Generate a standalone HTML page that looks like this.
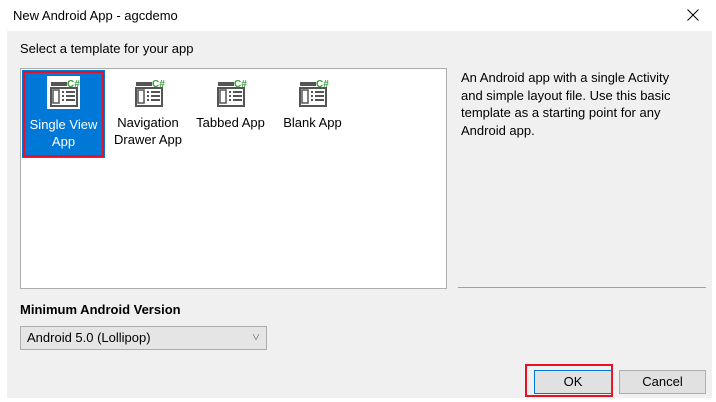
<!DOCTYPE html>
<html><head><style>
body{margin:0;width:716px;height:402px;background:#fff;position:relative;overflow:hidden;font-family:"Liberation Sans","Noto Sans CJK SC",sans-serif;font-size:13px;color:#000}
.a{position:absolute}
.panel{left:7px;top:31px;width:705px;height:367px;background:#f0f0f0}
.list{left:20px;top:68px;width:425px;height:219px;background:#fff;border:1px solid #adadad}
.item{position:absolute;top:2px;width:81px;height:86px;text-align:center;line-height:17px}
.item .t{position:absolute;top:43px;left:0;width:100%}
.ic{position:absolute;left:24px;top:5px;width:33px;height:33px}
.btn{background:#e1e1e1;border:1px solid #adadad;text-align:center;line-height:22px}
</style></head><body>
<div class="a" style="left:13px;top:8px">New Android App - agcdemo</div>
<svg class="a" style="left:687px;top:9px" width="12" height="12" viewBox="0 0 12 12"><path d="M0.5 0.5L11.5 11.5M11.5 0.5L0.5 11.5" stroke="#000" stroke-width="1"/></svg>
<div class="a panel"></div>
<div class="a" style="left:20px;top:41px">Select a template for your app</div>
<div class="a list">
 <div class="item" style="left:2px;background:#0078d7;color:#fff;box-sizing:border-box;border:2px solid #e81123;outline:1px solid #0078d7">
  <svg class="ic" style="left:22px;top:3px;background:#fff" viewBox="0 0 33 33"><rect x="4" y="6" width="16" height="4" fill="#555"/><text x="20" y="11" font-size="10" font-weight="bold" fill="#3c9b3c" font-family="Liberation Sans">C#</text><rect x="4" y="12" width="26" height="18" fill="none" stroke="#555" stroke-width="2"/><rect x="6" y="14" width="6" height="13" fill="none" stroke="#555" stroke-width="1.5"/><path d="M15 16h2M19 16h9M15 20h2M19 20h9M15 24h2M19 24h9" stroke="#555" stroke-width="2"/></svg>
  <div class="t">Single View<br>App</div></div>
 <div class="item" style="left:87px;width:80px">
  <svg class="ic" viewBox="0 0 33 33"><rect x="4" y="6" width="16" height="4" fill="#555"/><text x="20" y="11" font-size="10" font-weight="bold" fill="#3c9b3c" font-family="Liberation Sans">C#</text><rect x="4" y="12" width="26" height="18" fill="none" stroke="#555" stroke-width="2"/><rect x="6" y="14" width="6" height="13" fill="none" stroke="#555" stroke-width="1.5"/><path d="M15 16h2M19 16h9M15 20h2M19 20h9M15 24h2M19 24h9" stroke="#555" stroke-width="2"/></svg>
  <div class="t">Navigation<br>Drawer App</div></div>
 <div class="item" style="left:169px">
  <svg class="ic" viewBox="0 0 33 33"><rect x="4" y="6" width="16" height="4" fill="#555"/><text x="20" y="11" font-size="10" font-weight="bold" fill="#3c9b3c" font-family="Liberation Sans">C#</text><rect x="4" y="12" width="26" height="18" fill="none" stroke="#555" stroke-width="2"/><rect x="6" y="14" width="6" height="13" fill="none" stroke="#555" stroke-width="1.5"/><path d="M15 16h2M19 16h9M15 20h2M19 20h9M15 24h2M19 24h9" stroke="#555" stroke-width="2"/></svg>
  <div class="t">Tabbed App</div></div>
 <div class="item" style="left:251px">
  <svg class="ic" viewBox="0 0 33 33"><rect x="4" y="6" width="16" height="4" fill="#555"/><text x="20" y="11" font-size="10" font-weight="bold" fill="#3c9b3c" font-family="Liberation Sans">C#</text><rect x="4" y="12" width="26" height="18" fill="none" stroke="#555" stroke-width="2"/><rect x="6" y="14" width="6" height="13" fill="none" stroke="#555" stroke-width="1.5"/><path d="M15 16h2M19 16h9M15 20h2M19 20h9M15 24h2M19 24h9" stroke="#555" stroke-width="2"/></svg>
  <div class="t">Blank App</div></div>
</div>
<div class="a" style="left:461px;top:69px;width:250px;line-height:17.5px">An Android app with a single Activity<br>and simple layout file. Use this basic<br>template as a starting point for any<br>Android app.</div>
<div class="a" style="left:458px;top:287px;width:248px;height:1px;background:#a0a0a0"></div>
<div class="a" style="left:20px;top:302px;font-weight:bold">Minimum Android Version</div>
<div class="a" style="left:20px;top:326px;width:245px;height:22px;background:#e5e5e5;border:1px solid #adadad;line-height:22px;text-indent:6px">Android 5.0 (Lollipop)<span style="position:absolute;right:6px;font-size:8px;color:#555">&#8744;</span></div>
<div class="a" style="left:525px;top:364px;width:88px;height:33px;border:2px solid #e81123;box-sizing:border-box"></div>
<div class="a btn" style="left:534px;top:370px;width:76px;height:22px;border-color:#0078d7">OK</div>
<div class="a btn" style="left:619px;top:370px;width:85px;height:22px">Cancel</div>
</body></html>
